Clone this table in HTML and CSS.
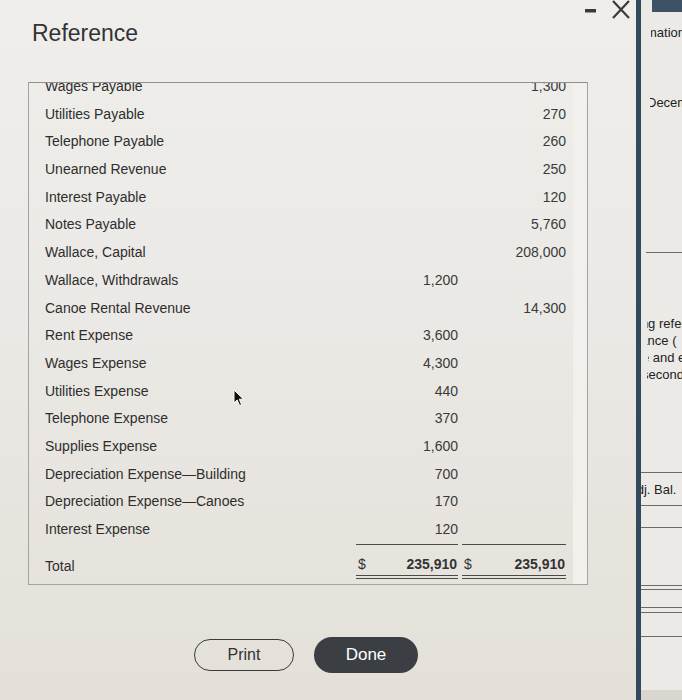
FILE: index.html
```html
<!DOCTYPE html>
<html lang="en">
<head>
<meta charset="utf-8">
<title>Reference</title>
<link rel="stylesheet" href="styles.css">
</head>
<body>
<div class="app">
  <div class="modal">
    <div class="header">
      <h1 class="title">Reference</h1>
      <div class="controls">
        <svg class="min" width="14" height="20" viewBox="0 0 14 20"><rect x="1" y="9" width="11" height="3.5" fill="#3a3a3a"/></svg>
        <svg class="close" width="20" height="20" viewBox="0 0 20 20"><path d="M2 1 L18 18 M18 1 L2 18" stroke="#3a3a3a" stroke-width="2.2" fill="none"/></svg>
      </div>
    </div>

    <div class="box">
      <div class="list">
        <div class="rows">
          <div class="row"><span class="label">Wages Payable</span><span class="num"></span><span class="num">1,300</span></div>
          <div class="row"><span class="label">Utilities Payable</span><span class="num"></span><span class="num">270</span></div>
          <div class="row"><span class="label">Telephone Payable</span><span class="num"></span><span class="num">260</span></div>
          <div class="row"><span class="label">Unearned Revenue</span><span class="num"></span><span class="num">250</span></div>
          <div class="row"><span class="label">Interest Payable</span><span class="num"></span><span class="num">120</span></div>
          <div class="row"><span class="label">Notes Payable</span><span class="num"></span><span class="num">5,760</span></div>
          <div class="row"><span class="label">Wallace, Capital</span><span class="num"></span><span class="num">208,000</span></div>
          <div class="row"><span class="label">Wallace, Withdrawals</span><span class="num">1,200</span><span class="num"></span></div>
          <div class="row"><span class="label">Canoe Rental Revenue</span><span class="num"></span><span class="num">14,300</span></div>
          <div class="row"><span class="label">Rent Expense</span><span class="num">3,600</span><span class="num"></span></div>
          <div class="row"><span class="label">Wages Expense</span><span class="num">4,300</span><span class="num"></span></div>
          <div class="row"><span class="label">Utilities Expense</span><span class="num">440</span><span class="num"></span></div>
          <div class="row"><span class="label">Telephone Expense</span><span class="num">370</span><span class="num"></span></div>
          <div class="row"><span class="label">Supplies Expense</span><span class="num">1,600</span><span class="num"></span></div>
          <div class="row"><span class="label">Depreciation Expense—Building</span><span class="num">700</span><span class="num"></span></div>
          <div class="row"><span class="label">Depreciation Expense—Canoes</span><span class="num">170</span><span class="num"></span></div>
          <div class="row"><span class="label">Interest Expense</span><span class="num">120</span><span class="num"></span></div>
          <div class="row total">
            <span class="label">Total</span>
            <span class="num sum"><span class="cur">$</span><b>235,910</b></span>
            <span class="num sum"><span class="cur">$</span><b>235,910</b></span>
          </div>
        </div>
      </div>
      <div class="track"></div>
    </div>

    <div class="actions">
      <button class="btn print">Print</button>
      <button class="btn done">Done</button>
    </div>
  </div>

  <div class="divider"></div>

  <div class="side">
    <div class="strip"></div>
    <div class="stext t1"><span class="cut5">mation</span></div>
    <div class="stext t2"><span class="cut3">December</span></div>
    <div class="sline l1"></div>
    <div class="para">
      <div class="stext p1"><span class="cut9">ing reference</span></div>
      <div class="stext p2"><span class="cut24">balance (</span></div>
      <div class="stext p3"><span class="cut9">le and ex</span></div>
      <div class="stext p4"><span class="cut5">second</span></div>
    </div>
    <div class="sline l2"></div>
    <div class="stext t3"><span class="cut13">Adj. Bal.</span></div>
    <div class="sline l3"></div>
    <div class="sline l4"></div>
    <div class="sline l5"></div>
    <div class="sline l6"></div>
    <div class="sline l7"></div>
    <div class="sline l8"></div>
    <div class="sline l9"></div>
    <div class="foot"></div>
  </div>
</div>

<svg class="cursor" width="12" height="18" viewBox="0 0 12 18"><path d="M1 1 L1 14 L4.2 11 L6.6 16.5 L8.6 15.6 L6.3 10.2 L10.5 10.2 Z" fill="#111" stroke="#fff" stroke-width="1"/></svg>
</body>
</html>
```

FILE: styles.css
```css
* { box-sizing: border-box; }

html, body {
  margin: 0;
  padding: 0;
}

body {
  width: 682px;
  height: 700px;
  overflow: hidden;
  position: relative;
  font-family: "Liberation Sans", Arial, sans-serif;
  color: #2f2f2f;
  background: linear-gradient(180deg, #efeeeb 0%, #ebe9e5 45%, #e4e0d9 100%);
}

.app {
  display: flex;
  height: 700px;
}

.modal {
  width: 636px;
  flex: none;
}

.header {
  height: 82px;
  display: flex;
  justify-content: space-between;
  align-items: flex-start;
  padding-left: 32px;
  padding-right: 5px;
}

.title {
  margin: 19px 0 0 0;
  font-size: 23px;
  line-height: 28px;
  font-weight: 400;
  color: #333;
}

.controls {
  display: flex;
  align-items: flex-start;
  gap: 13px;
}

.box {
  margin-left: 28px;
  width: 560px;
  height: 503px;
  border: 1px solid #a3a3a1;
  border-top-color: #8f8f8d;
  display: flex;
}

.list {
  flex: 1;
  overflow: hidden;
  padding: 0 7px 0 16px;
}

.rows {
  margin-top: -10px;
}

.row {
  display: grid;
  grid-template-columns: 1fr 102px 104px;
  column-gap: 4px;
  height: 27.7px;
  line-height: 27.7px;
  font-size: 14px;
}

.label {
  color: #2e2e2e;
  white-space: nowrap;
}

.num {
  text-align: right;
  color: #3a3a3a;
}

.row.total {
  height: auto;
  line-height: 18px;
}

.row.total .label {
  padding-top: 13px;
}

.sum {
  display: flex;
  justify-content: space-between;
  border-top: 1px solid #4a4a4a;
  border-bottom: 4px double #4a4a4a;
  padding: 10px 1px 2px 2px;
}

.sum b {
  font-weight: 700;
  color: #333;
}

.cur {
  color: #333;
}

.track {
  width: 14px;
  background: #f1f0ed;
}

.actions {
  display: flex;
  align-items: center;
  gap: 20px;
  margin-top: 52px;
  padding-left: 194px;
}

.btn {
  font-family: "Liberation Sans", Arial, sans-serif;
  font-size: 16px;
  cursor: pointer;
}

.print {
  width: 100px;
  height: 32px;
  border: 1.5px solid #3a3a3a;
  border-radius: 16px;
  background: transparent;
  color: #333;
}

.done {
  width: 104px;
  height: 36px;
  border: none;
  border-radius: 18px;
  background: #3b3e42;
  color: #fff;
  font-size: 17px;
}

.divider {
  width: 5px;
  flex: none;
  background: #34495c;
}

.side {
  flex: 1;
  overflow: hidden;
  background: #eceae6;
}

.strip {
  height: 12px;
  margin-left: 11px;
  background: #3d5266;
}

.stext {
  font-size: 13px;
  line-height: 17px;
  white-space: nowrap;
  overflow: hidden;
  color: #222;
}

.t1 { margin-top: 12px; margin-left: 10px; }
.t2 { margin-top: 53px; margin-left: 9px; }

.cut3 { margin-left: -3px; }
.cut5 { margin-left: -5px; }
.cut9 { margin-left: -9px; }
.cut13 { margin-left: -13px; }
.cut24 { margin-left: -24px; }

.sline {
  border-top: 1px solid #6b6b6b;
}

.l1 { margin-top: 141px; margin-left: 5px; }

.para {
  margin-top: 62px;
}

.p1, .p2, .p4 { margin-left: 6px; }
.p3 { margin-left: 7px; }

.l2 { margin-top: 89px; margin-left: 0; }
.t3 { margin-top: 8px; }
.l3 { margin-top: 7px; }
.l4 { margin-top: 21px; }
.l5 { margin-top: 57px; }
.l6 { margin-top: 3px; }
.l7 { margin-top: 17px; }
.l8 { margin-top: 4px; }
.l9 { margin-top: 23px; }

.foot {
  margin-top: 53px;
  height: 20px;
  background: #d9d6d0;
}

.cursor {
  position: absolute;
  left: 233px;
  top: 389px;
}
```
